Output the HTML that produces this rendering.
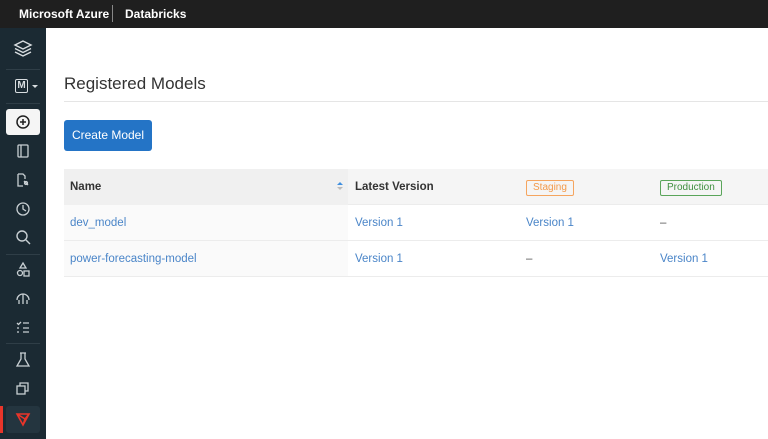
<!DOCTYPE html>
<html><head><meta charset="utf-8"><style>
*{margin:0;padding:0;box-sizing:border-box}
body{width:768px;height:439px;overflow:hidden;background:#fff;font-family:"Liberation Sans",sans-serif;position:relative}
.top{position:absolute;left:0;top:0;width:768px;height:28px;background:#1f1f1f;color:#fff;font-size:12px;font-weight:bold}
.top span{position:absolute;top:7px;display:block}
.side{position:absolute;left:0;top:28px;width:46px;height:411px;background:#1b2a33}
.ic{position:absolute;left:13px;width:20px;height:20px}
.sep{position:absolute;left:6px;width:34px;height:1px;background:#2f3e47}
h1{position:absolute;left:64px;top:74px;font-size:17px;font-weight:normal;color:#333}
.hr{position:absolute;left:64px;top:101px;width:704px;height:1px;background:#e5e5e5}
.btn{position:absolute;left:64px;top:120px;width:88px;height:31px;background:#2474c6;border-radius:3px;color:#fff;font-size:12px;text-align:center;line-height:31px}
.row{position:absolute;left:64px;width:704px;height:36px;border-bottom:1px solid #ececec}
.c{position:absolute;top:0;line-height:36px}
a{color:#4a85c8;text-decoration:none}
.tag{display:inline-block;border:1px solid;border-radius:2px;font-size:10px;line-height:14px;padding:0 6px;font-weight:normal}
</style></head><body>
<div class="top"><span style="left:19px">Microsoft Azure</span><span style="left:112px;top:5px;width:1px;height:17px;background:#888"></span><span style="left:125px">Databricks</span></div>
<div class="side">
<svg class="ic" style="top:11px" viewBox="0 0 20 20" fill="none" stroke="#d8dde0" stroke-width="1.4"><path d="M10 2 2 6l8 4 8-4z"/><path d="M2 9.5l8 4 8-4"/><path d="M2 13l8 4 8-4"/></svg>
<div class="sep" style="top:41px"></div>
<div style="position:absolute;left:15px;top:51px;width:13px;height:14px;border:1.5px solid #d8dde0;border-radius:2px;color:#d8dde0;font-size:10px;font-weight:bold;text-align:center;line-height:11px">M</div>
<div style="position:absolute;left:32px;top:57px;border:3px solid transparent;border-top:3px solid #d8dde0"></div>
<div class="sep" style="top:75px"></div>
<div style="position:absolute;left:6px;top:81px;width:34px;height:26px;background:#f5f5f5;border-radius:3px"></div>
<svg class="ic" style="top:84px" viewBox="0 0 20 20" fill="none" stroke="#222" stroke-width="1.5"><circle cx="10" cy="10" r="6"/><path d="M10 7v6M7 10h6"/></svg>
<svg class="ic" style="top:113px" viewBox="0 0 20 20" fill="none" stroke="#c8cfd3" stroke-width="1.3"><rect x="5" y="4" width="10" height="12" rx="1"/><path d="M8 4v12"/></svg>
<svg class="ic" style="top:142px" viewBox="0 0 20 20" fill="none" stroke="#c8cfd3" stroke-width="1.3"><path d="M5 4h5l2 2v3M5 4v12h5"/><circle cx="13" cy="13" r="1.5"/><path d="M11 11l4 4"/></svg>
<svg class="ic" style="top:171px" viewBox="0 0 20 20" fill="none" stroke="#c8cfd3" stroke-width="1.3"><circle cx="10" cy="10" r="6"/><path d="M10 6v4l3 2"/></svg>
<svg class="ic" style="top:199px" viewBox="0 0 20 20" fill="none" stroke="#c8cfd3" stroke-width="1.4"><circle cx="9" cy="9" r="5"/><path d="M13 13l4 4"/></svg>
<div class="sep" style="top:226px"></div>
<svg class="ic" style="top:232px" viewBox="0 0 20 20" fill="none" stroke="#c8cfd3" stroke-width="1.3"><path d="M10 3l3 5H7z"/><circle cx="7" cy="13" r="2.5"/><rect x="11" y="11" width="5" height="5"/></svg>
<svg class="ic" style="top:260px" viewBox="0 0 20 20" fill="none" stroke="#c8cfd3" stroke-width="1.3"><path d="M4 12a6 6 0 0 1 12 0M10 6v10M6 12v4M14 12v4"/></svg>
<svg class="ic" style="top:289px" viewBox="0 0 20 20" fill="none" stroke="#c8cfd3" stroke-width="1.3"><path d="M4 6l1.5 1.5L8 5M10 6h6M4 11h2M10 11h6M4 15h2M10 15h6"/></svg>
<div class="sep" style="top:315px"></div>
<svg class="ic" style="top:322px" viewBox="0 0 20 20" fill="none" stroke="#c8cfd3" stroke-width="1.3"><path d="M8 3v6l-4 7h12l-4-7V3M7 3h6"/></svg>
<svg class="ic" style="top:350px" viewBox="0 0 20 20" fill="none" stroke="#c8cfd3" stroke-width="1.3"><rect x="4" y="8" width="8" height="8"/><path d="M7 8V5h8v8h-3"/></svg>
<div style="position:absolute;left:0;top:378px;width:3px;height:27px;background:#e8352a"></div>
<div style="position:absolute;left:6px;top:378px;width:34px;height:27px;background:#24353f;border-radius:3px"></div>
<svg class="ic" style="top:381px" viewBox="0 0 20 20" fill="none" stroke="#e8352a" stroke-width="1.6"><path d="M4 5l12 0-6 11zM4 5l8 5 4-5M10 16l2-6"/></svg>
</div>
<h1>Registered Models</h1>
<div class="hr"></div>
<div class="btn">Create Model</div>
<div class="row" style="top:169px;background:#f5f5f5;font-weight:bold;color:#333;font-size:11.5px">
<div style="position:absolute;left:0;top:0;width:284px;height:36px;background:#f0f0f0"></div>
<div class="c" style="left:6px">Name</div>
<div style="position:absolute;left:273px;top:13px;border:3px solid transparent;border-bottom:3px solid #3f8fe0;border-top:0"></div>
<div style="position:absolute;left:273px;top:18px;border:3px solid transparent;border-top:3px solid #bbb;border-bottom:0"></div>
<div class="c" style="left:291px">Latest Version</div>
<div class="c" style="left:462px"><span class="tag" style="color:#f39a4a;border-color:#f5a55f">Staging</span></div>
<div class="c" style="left:596px"><span class="tag" style="color:#3f8f3f;border-color:#5aa55a">Production</span></div>
</div>
<div class="row" style="top:205px;font-size:11.5px">
<div style="position:absolute;left:0;top:0;width:284px;height:35px;background:#fafafa"></div>
<div class="c" style="left:6px"><a>dev_model</a></div>
<div class="c" style="left:291px"><a>Version 1</a></div>
<div class="c" style="left:462px"><a>Version 1</a></div>
<div class="c" style="left:596px;color:#555">–</div>
</div>
<div class="row" style="top:241px;font-size:11.5px">
<div style="position:absolute;left:0;top:0;width:284px;height:35px;background:#fafafa"></div>
<div class="c" style="left:6px"><a>power-forecasting-model</a></div>
<div class="c" style="left:291px"><a>Version 1</a></div>
<div class="c" style="left:462px;color:#555">–</div>
<div class="c" style="left:596px"><a>Version 1</a></div>
</div>
</body></html>
